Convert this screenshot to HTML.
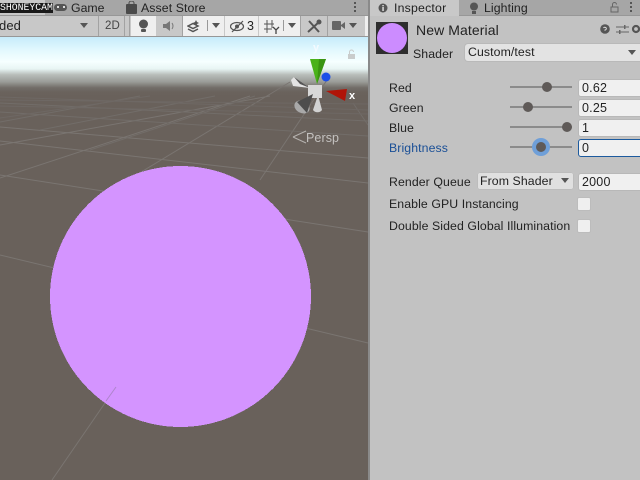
<!DOCTYPE html>
<html><head><meta charset="utf-8"><style>
html,body{margin:0;padding:0;width:640px;height:480px;overflow:hidden;background:#c2c2c2}
body{position:relative;font-family:"Liberation Sans",sans-serif;font-size:12px;color:#222}
.a{position:absolute}
.t{position:absolute;white-space:nowrap;line-height:14px;letter-spacing:.09px}
.f{position:absolute;left:578px;width:70px;height:16px;background:#f0f0f0;border:1px solid #b8b8b8;border-radius:3px;box-sizing:content-box;line-height:16px;text-indent:3px;font-size:12.5px;letter-spacing:.2px}
.c{position:absolute;left:577px;width:12px;height:12px;background:#efefef;border:1px solid #bcbcbc;border-radius:2px}
.track{position:absolute;left:510px;width:62px;height:2px;background:#8b8b8b}
.th{position:absolute;width:10px;height:10px;border-radius:50%;background:#5f5a58}
.b{position:absolute;top:16px;height:20px;background:#efefef}
.d{position:absolute;top:16px;height:20px;width:1px;background:#a2a2a2}
</style></head><body>
<svg class="a" style="left:0;top:0" width="640" height="480" viewBox="0 0 640 480">
<defs><linearGradient id="sky" x1="0" y1="37" x2="0" y2="96" gradientUnits="userSpaceOnUse">
<stop offset="0" stop-color="#c6ebfb"/><stop offset=".22" stop-color="#e2f8fe"/><stop offset=".42" stop-color="#f6ffff"/><stop offset=".54" stop-color="#e8f5f4"/><stop offset=".64" stop-color="#b8bdba"/><stop offset=".76" stop-color="#9a9c98"/><stop offset=".86" stop-color="#726d68"/><stop offset=".93" stop-color="#6a635d"/><stop offset="1" stop-color="#69615b"/></linearGradient></defs>
<rect x="0" y="37" width="368" height="443" fill="#69615b"/>
<rect x="0" y="37" width="368" height="60" fill="url(#sky)"/>
<g stroke="#7a7571" stroke-width="1" fill="none">
<path d="M0 175L368 232M0 255L368 343M0 127L368 158M0 141L368 183"/>
<path d="M0 178L250 96M0 145L270 96M52 480L116 387M260 180L327 80M123 183L290 82"/>
</g>
<g stroke="#726d69" stroke-width="1" fill="none"><path d="M0 112L368 136M0 103L368 121M353 103L368 125M0 122L140 96M40 130L215 96M90 150L255 96"/></g>
<g stroke="#6e6864" stroke-width="1" fill="none"><path d="M0 97L368 110M0 106L368 114M0 100L368 104M0 118L150 96"/></g>
<circle cx="180.5" cy="296.5" r="130.5" fill="#d494ff" shape-rendering="crispEdges"/>
<path d="M106 401L116 387" stroke="#ae84cc" stroke-width="1"/>
<!-- gizmo -->
<path d="M291 80L294 77 310 88 293 86Z" fill="#e3e3e3"/>
<path d="M294 77L310 88 300 84Z" fill="#555"/>
<rect x="308" y="85" width="14" height="13" fill="#d8d8d8"/>
<path d="M310 59L326 59 317 84Z" fill="#4ab21a"/><path d="M319 59L326 59 317 84Z" fill="#3a9412"/>
<circle cx="326" cy="77" r="4.500" fill="#1c4fe8"/>
<path d="M326 91L347 89 345 101Z" fill="#b01408"/>
<ellipse cx="302" cy="107" rx="8" ry="6" transform="rotate(28 302 107)" fill="#a9a9a9"/>
<path d="M297 102L313 94 307 113Z" fill="#4d4d4d"/>
<path d="M318 95L313 110C315 113 320 113 322 110Z" fill="#d2d2d2"/>
<path d="M293 137L306 131M293 137L306 143" stroke="#b5b2af" stroke-width="1" fill="none"/>
<rect x="348" y="54" width="7" height="5" fill="#c9cccc"/><path d="M349.500 54v-2a2 2 0 0 1 4 0" stroke="#c9cccc" fill="none"/>
</svg>
<div class="t" style="left:313px;top:41px;color:#f4fbff;font-weight:bold;font-size:11px">y</div>
<div class="t" style="left:349px;top:89px;color:#fff;font-weight:bold;font-size:11px">x</div>
<div class="t" style="left:306px;top:131px;color:#c4c2c0;font-size:12.500px">Persp</div>

<!-- top tabs -->
<div class="a" style="left:0;top:0;width:368px;height:15px;background:#a6a6a6"></div>
<div class="a" style="left:0;top:0;width:45px;height:15px;background:#c8c8c8"></div>
<div class="a" style="left:0;top:15px;width:368px;height:1px;background:#979797"></div>
<div class="a" style="left:0;top:3px;width:53px;height:10px;background:#1a1a1a"></div>
<div class="t" style="left:0;top:1px;color:#fff;font-family:'Liberation Mono',monospace;font-size:9.800px;letter-spacing:0">SHONEYCAM</div>
<svg class="a" style="left:54px;top:3px" width="14" height="10"><rect x="0" y="1" width="13" height="7" rx="3.500" fill="#555"/><rect x="3" y="3" width="2" height="2" fill="#ddd"/><rect x="9" y="3" width="2" height="2" fill="#ddd"/></svg>
<div class="t" style="left:71px;top:1px;font-size:12.300px;letter-spacing:0">Game</div>
<svg class="a" style="left:126px;top:1px" width="12" height="13"><rect x="0" y="3" width="11" height="10" rx="1" fill="#4a4a4a"/><path d="M3 4V2a2.500 2 0 0 1 5 0v2" stroke="#4a4a4a" fill="none"/></svg>
<div class="t" style="left:141px;top:1px;font-size:12.300px">Asset Store</div>
<svg class="a" style="left:353px;top:1px" width="4" height="14"><rect x="1" y="1" width="2" height="2" fill="#555"/><rect x="1" y="5" width="2" height="2" fill="#555"/><rect x="1" y="9" width="2" height="2" fill="#555"/></svg>

<!-- toolbar -->
<div class="a" style="left:0;top:16px;width:368px;height:20px;background:#c8c8c8"></div>
<div class="a" style="left:0;top:36px;width:368px;height:1px;background:#979797"></div>
<div class="t" style="left:-1px;top:19px;font-size:13px">ded</div>
<svg class="a" style="left:80px;top:23px" width="9" height="6"><path d="M0 0H8L4 5Z" fill="#555"/></svg>
<div class="d" style="left:98px"></div><div class="d" style="left:124px"></div><div class="d" style="left:129px"></div>
<div class="t" style="left:105px;top:19px;font-size:11.500px;color:#444">2D</div>
<div class="b" style="left:131px;width:25px"></div>
<div class="b" style="left:183px;width:41px"></div>
<div class="b" style="left:225px;width:33px"></div>
<div class="b" style="left:259px;width:41px"></div>
<div class="d" style="left:182px"></div><div class="d" style="left:327px"></div><div class="d" style="left:300px"></div>
<div class="b" style="left:365px;width:3px"></div>
<svg class="a" style="left:138px;top:18px" width="12" height="16"><circle cx="5.500" cy="6" r="4.500" fill="#555"/><rect x="3" y="11" width="5" height="3" rx="1" fill="#555"/></svg>
<svg class="a" style="left:162px;top:19px" width="14" height="14"><path d="M1 5H4L8 2V12L4 9H1Z" fill="#777"/><path d="M10 4Q12 7 10 10" stroke="#777" fill="none"/></svg>
<svg class="a" style="left:187px;top:19px" width="14" height="14"><path d="M1 7L6 4.500 11 7 6 9.500ZM1 10L6 12.500 11 10" stroke="#555" stroke-width="1.500" fill="none"/><path d="M9 1L10 3 12 4 10 5 9 7 8 5 6 4 8 3Z" fill="#555"/></svg>
<div class="a" style="left:207px;top:20px;width:1px;height:11px;background:#999"></div>
<svg class="a" style="left:212px;top:23px" width="9" height="6"><path d="M0 0H8L4 5Z" fill="#555"/></svg>
<svg class="a" style="left:230px;top:19px" width="17" height="14"><ellipse cx="7" cy="7.500" rx="6.500" ry="4" stroke="#555" stroke-width="1.200" fill="none"/><circle cx="7" cy="7.500" r="2" fill="#555"/><path d="M2 13L13 2" stroke="#555" stroke-width="1.200"/></svg>
<div class="t" style="left:247px;top:19px;font-size:12.500px">3</div>
<svg class="a" style="left:264px;top:19px" width="17" height="15"><path d="M0 5H10M0 10H8M3 1V14M8 1V9" stroke="#555" fill="none"/><path d="M9 8L12 11 15 8M12 11V15" stroke="#444" stroke-width="1.300" fill="none"/></svg>
<div class="a" style="left:283px;top:20px;width:1px;height:11px;background:#999"></div>
<svg class="a" style="left:288px;top:23px" width="9" height="6"><path d="M0 0H8L4 5Z" fill="#555"/></svg>
<svg class="a" style="left:306px;top:19px" width="16" height="15"><path d="M2 13L13 3M3 2L13 13" stroke="#555" stroke-width="2" fill="none"/><circle cx="13" cy="3" r="2.500" fill="#555"/></svg>
<svg class="a" style="left:332px;top:20px" width="14" height="12"><rect x="0" y="1" width="9" height="9" rx="1" fill="#666"/><path d="M9 5L13 2V9L9 6Z" fill="#666"/></svg>
<svg class="a" style="left:349px;top:23px" width="9" height="6"><path d="M0 0H8L4 5Z" fill="#555"/></svg>

<!-- divider -->
<div class="a" style="left:368px;top:0;width:2px;height:480px;background:#8a8a8a"></div>

<!-- inspector -->
<div class="a" style="left:370px;top:0;width:270px;height:480px;background:#c2c2c2"></div>
<div class="a" style="left:370px;top:0;width:89px;height:16px;background:#c8c8c8"></div>
<div class="a" style="left:459px;top:0;width:181px;height:15px;background:#a6a6a6"></div>
<div class="a" style="left:459px;top:15px;width:181px;height:1px;background:#979797"></div>
<svg class="a" style="left:378px;top:3px" width="10" height="10"><circle cx="5" cy="5" r="4.500" fill="#555"/><rect x="4.300" y="4" width="1.500" height="4" fill="#ddd"/><rect x="4.300" y="2" width="1.500" height="1.300" fill="#ddd"/></svg>
<div class="t" style="left:394px;top:1px;font-size:12.300px;letter-spacing:.2px">Inspector</div>
<svg class="a" style="left:469px;top:2px" width="10" height="13"><circle cx="5" cy="4.500" r="4" fill="#555"/><rect x="3" y="9" width="4" height="3" fill="#555"/></svg>
<div class="t" style="left:484px;top:1px;font-size:12.300px">Lighting</div>
<svg class="a" style="left:610px;top:1px" width="10" height="12"><rect x="1" y="6" width="7" height="5" fill="none" stroke="#666"/><path d="M2.500 6V3.500a2 2 0 0 1 4 0" fill="none" stroke="#666"/></svg>
<svg class="a" style="left:629px;top:1px" width="4" height="12"><rect x="1" y="1" width="2" height="2" fill="#555"/><rect x="1" y="5" width="2" height="2" fill="#555"/><rect x="1" y="9" width="2" height="2" fill="#555"/></svg>

<div class="a" style="left:376px;top:22px;width:32px;height:32px;background:#2e2e2e"></div>
<div class="a" style="left:377px;top:23px;width:30px;height:30px;border-radius:50%;background:#cc8cff"></div>
<div class="t" style="left:416px;top:23px;font-size:14px">New Material</div>
<svg class="a" style="left:600px;top:24px" width="40" height="11"><circle cx="5" cy="5" r="4.800" fill="#555"/><path d="M3.500 4a1.500 1.400 0 1 1 1.500 2V6.800" stroke="#ddd" fill="none"/><path d="M16 3H29M16 8H29" stroke="#666"/><rect x="24" y="1" width="1.500" height="4" fill="#666"/><rect x="19" y="6" width="1.500" height="4" fill="#666"/><circle cx="36" cy="5" r="3" fill="none" stroke="#555" stroke-width="2.200"/></svg>
<div class="t" style="left:413px;top:47px;font-size:12.300px">Shader</div>
<div class="a" style="left:465px;top:44px;width:180px;height:17px;background:#e3e3e3;border-radius:3px;box-shadow:0 0 0 1px #b9b9b9"></div>
<div class="t" style="left:468px;top:45px;font-size:12.300px">Custom/test</div>
<svg class="a" style="left:628px;top:50px" width="9" height="6"><path d="M0 0H8L4 5Z" fill="#555"/></svg>

<div class="t" style="left:389px;top:81px;font-size:12.300px">Red</div>
<div class="t" style="left:389px;top:101px;font-size:12.300px">Green</div>
<div class="t" style="left:389px;top:121px;font-size:12.300px">Blue</div>
<div class="t" style="left:389px;top:141px;font-size:12.300px;color:#1a4f96">Brightness</div>
<div class="track" style="top:86px"></div><div class="track" style="top:106px"></div><div class="track" style="top:126px"></div><div class="track" style="top:146px"></div>
<div class="th" style="left:542px;top:82px"></div>
<div class="th" style="left:523px;top:102px"></div>
<div class="th" style="left:562px;top:122px"></div>
<div class="a" style="left:532px;top:138px;width:18px;height:18px;border-radius:50%;background:#6f9fd8"></div>
<div class="th" style="left:536px;top:142px"></div>
<div class="f" style="top:79px">0.62</div>
<div class="f" style="top:99px">0.25</div>
<div class="f" style="top:119px">1</div>
<div class="f" style="top:139px;border-color:#1c5a9e">0</div>

<div class="t" style="left:389px;top:175px;font-size:12.300px">Render Queue</div>
<div class="a" style="left:477px;top:172px;width:97px;height:18px;background:#e0e0e0;border-radius:3px;box-shadow:0 0 0 1px #bcbcbc inset"></div>
<div class="t" style="left:480px;top:174px;font-size:12.300px">From Shader</div>
<svg class="a" style="left:561px;top:178px" width="9" height="6"><path d="M0 0H8L4 5Z" fill="#555"/></svg>
<div class="f" style="top:173px">2000</div>
<div class="t" style="left:389px;top:197px;font-size:12.300px">Enable GPU Instancing</div>
<div class="c" style="top:197px"></div>
<div class="t" style="left:389px;top:219px;font-size:12.300px">Double Sided Global Illumination</div>
<div class="c" style="top:219px"></div>
</body></html>
